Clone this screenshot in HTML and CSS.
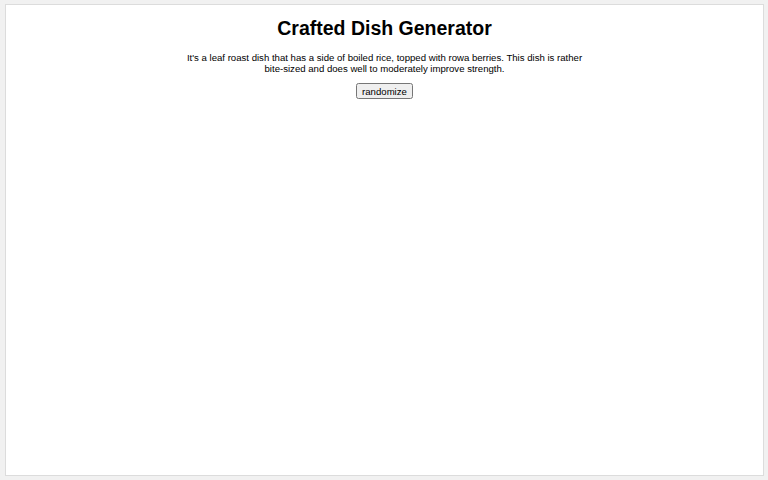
FILE: index.html
```html
<!DOCTYPE html>
<html lang="en">
<head>
    <meta charset="UTF-8">
    <meta name="viewport" content="width=device-width, initial-scale=1.0">
    <title>Crafted Dish Generator</title>
    <link rel="stylesheet" href="styles.css">
</head>
<body>

    <!-- main panel -->
    <div class="panel">
        <h1>Crafted Dish Generator</h1>
        <p id="dish-text">It's a leaf roast dish that has a side of boiled rice, topped with rowa berries. This dish is rather bite-sized and does well to moderately improve strength.</p>
        <button onclick="randomize()">randomize</button>
    </div>

    <script>
        const dishes = ["leaf roast", "fish stew", "mushroom skewer", "meat pie", "herb soup"];
        const sides = ["boiled rice", "baked potatoes", "fried greens", "sliced bread"];
        const toppings = ["rowa berries", "wild honey", "toasted nuts", "goat cheese"];
        const sizes = ["bite-sized", "hearty", "filling", "light"];
        const effects = ["moderately improve strength", "slightly restore stamina", "greatly boost speed", "mildly improve defense"];

        function pick(list) {
            return list[Math.floor(Math.random() * list.length)];
        }

        function randomize() {
            document.getElementById("dish-text").textContent =
                `It's a ${pick(dishes)} dish that has a side of ${pick(sides)}, topped with ${pick(toppings)}. This dish is rather ${pick(sizes)} and does well to ${pick(effects)}.`;
        }
    </script>

</body>
</html>
```

FILE: styles.css
```css
html, body { height: 100%; }
body { margin: 0; padding: 4px 4px 4px 5px; box-sizing: border-box; background: #f1f1f1; font-family: "Liberation Sans", Arial, sans-serif; }
.panel { height: 100%; box-sizing: border-box; background: #fff; border: 1px solid #dcdcdc; text-align: center; padding-top: 12px; }
h1 { font-size: 19.5px; margin: 0 0 12px; }
#dish-text { font-size: 9.6px; line-height: 11px; max-width: 400px; margin: 0 auto 7px; }
button { font-family: "Liberation Sans", Arial, sans-serif; font-size: 9.6px; line-height: 11px; padding: 1px 4px 0; }
```
